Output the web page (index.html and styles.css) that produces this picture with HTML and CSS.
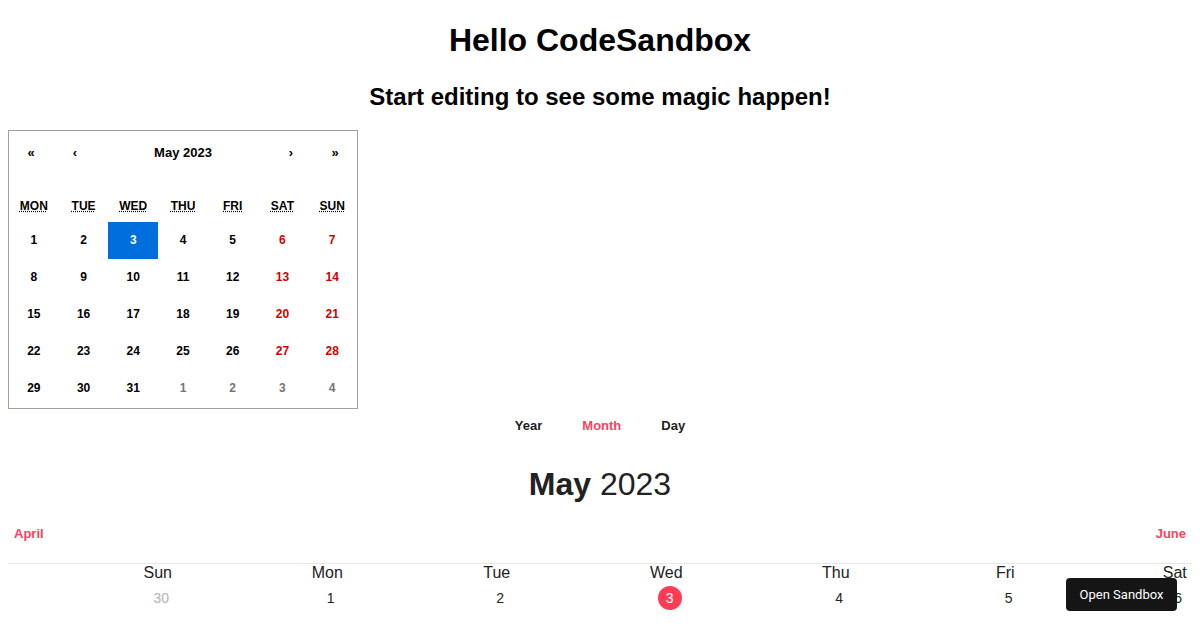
FILE: index.html
```html
<!DOCTYPE html>
<html>
<head>
  <meta name="viewport" content="width=device-width, initial-scale=1">
  <title>Calendar</title>
  <link rel="stylesheet" href="styles.css">
</head>
<body>

<div class="App">
  <h1>Hello CodeSandbox</h1>
  <h2>Start editing to see some magic happen!</h2>

  <div class="react-calendar">
    <div class="nav">
      <button class="nav-arrow">«</button>
      <button class="nav-arrow">‹</button>
      <button class="nav-label">May 2023</button>
      <button class="nav-arrow">›</button>
      <button class="nav-arrow">»</button>
    </div>

    <div class="weekdays">
      <div><abbr title="Monday">Mon</abbr></div>
      <div><abbr title="Tuesday">Tue</abbr></div>
      <div><abbr title="Wednesday">Wed</abbr></div>
      <div><abbr title="Thursday">Thu</abbr></div>
      <div><abbr title="Friday">Fri</abbr></div>
      <div><abbr title="Saturday">Sat</abbr></div>
      <div><abbr title="Sunday">Sun</abbr></div>
    </div>

    <div class="days">
      <button class="tile">1</button>
      <button class="tile">2</button>
      <button class="tile active">3</button>
      <button class="tile">4</button>
      <button class="tile">5</button>
      <button class="tile weekend">6</button>
      <button class="tile weekend">7</button>

      <button class="tile">8</button>
      <button class="tile">9</button>
      <button class="tile">10</button>
      <button class="tile">11</button>
      <button class="tile">12</button>
      <button class="tile weekend">13</button>
      <button class="tile weekend">14</button>

      <button class="tile">15</button>
      <button class="tile">16</button>
      <button class="tile">17</button>
      <button class="tile">18</button>
      <button class="tile">19</button>
      <button class="tile weekend">20</button>
      <button class="tile weekend">21</button>

      <button class="tile">22</button>
      <button class="tile">23</button>
      <button class="tile">24</button>
      <button class="tile">25</button>
      <button class="tile">26</button>
      <button class="tile weekend">27</button>
      <button class="tile weekend">28</button>

      <button class="tile">29</button>
      <button class="tile">30</button>
      <button class="tile">31</button>
      <button class="tile neighbor">1</button>
      <button class="tile neighbor">2</button>
      <button class="tile neighbor">3</button>
      <button class="tile neighbor">4</button>
    </div>
  </div>

  <div class="view-tabs">
    <button class="tab">Year</button>
    <button class="tab tab-on">Month</button>
    <button class="tab">Day</button>
  </div>

  <div class="month-title"><b>May</b> 2023</div>

  <div class="month-nav">
    <button class="month-link">April</button>
    <button class="month-link">June</button>
  </div>

  <div class="month-grid">
    <div class="grid-row heads">
      <div>Sun</div>
      <div>Mon</div>
      <div>Tue</div>
      <div>Wed</div>
      <div>Thu</div>
      <div>Fri</div>
      <div>Sat</div>
    </div>
    <div class="grid-row dates">
      <div class="date other">30</div>
      <div class="date">1</div>
      <div class="date">2</div>
      <div class="date"><span class="today">3</span></div>
      <div class="date">4</div>
      <div class="date">5</div>
      <div class="date">6</div>
    </div>
  </div>
</div>

<button class="open-sandbox">Open Sandbox</button>

</body>
</html>
```

FILE: styles.css
```css
body {
  margin: 8px;
  font-family: "Liberation Sans", Arial, sans-serif;
  color: #000;
  background: #fff;
}

.App h1,
.App h2 {
  text-align: center;
}

.App h1 {
  margin-top: 14px;
  margin-bottom: 23.5px;
}

.App h2 {
  margin-bottom: 19px;
}

button {
  font-family: "Liberation Sans", Arial, sans-serif;
  background: none;
  border: 0;
  margin: 0;
  padding: 0;
  cursor: pointer;
}

/* small calendar */
.react-calendar {
  width: 350px;
  border: 1px solid #a0a096;
  background: white;
  box-sizing: border-box;
}

.nav {
  display: flex;
  height: 44px;
  margin-bottom: 16px;
}

.nav button {
  font-size: 13px;
  font-weight: bold;
  color: #000;
}

.nav-arrow {
  min-width: 44px;
}

.nav-label {
  flex-grow: 1;
}

.weekdays {
  display: grid;
  grid-template-columns: repeat(7, 1fr);
  height: 31px;
  text-align: center;
  text-transform: uppercase;
  font-size: 12px;
  font-weight: bold;
  line-height: 31px;
}

.weekdays abbr {
  text-decoration: underline dotted;
}

.days {
  display: grid;
  grid-template-columns: repeat(7, 1fr);
}

.tile {
  padding: 10px 6px;
  line-height: 17.2px;
  font-size: 12px;
  font-weight: bold;
  color: #000;
  text-align: center;
}

.tile.weekend {
  color: #d10000;
}

.tile.neighbor {
  color: #757575;
}

.tile.active {
  background: #006edc;
  color: white;
}

/* big month view */
.view-tabs {
  display: flex;
  justify-content: center;
  gap: 40px;
  padding: 9px 0 10px;
}

.tab {
  font-size: 13px;
  line-height: 15px;
  font-weight: bold;
  color: #222;
}

.tab-on {
  color: #ff4060;
}

.month-title {
  margin-top: 23px;
  text-align: center;
  font-size: 32px;
  line-height: 37px;
  color: #222;
}

.month-nav {
  display: flex;
  justify-content: space-between;
  padding: 0 6px;
  margin-top: 23px;
}

.month-link {
  font-size: 13px;
  line-height: 15px;
  font-weight: bold;
  color: #ff4060;
}

.month-grid {
  margin-top: 22px;
  border-top: 1px solid #e6e6e6;
  overflow: hidden;
}

.grid-row {
  display: grid;
  grid-template-columns: repeat(7, 169.5px);
  padding-left: 65px;
  text-align: center;
  color: #222;
}

.heads {
  font-size: 16px;
  line-height: 18px;
}

.dates {
  margin-top: 4px;
  font-size: 14px;
  line-height: 24px;
}

.date {
  padding-left: 7px;
}

.date.other {
  color: #b3b3b3;
}

.today {
  display: inline-block;
  width: 24px;
  height: 24px;
  border-radius: 50%;
  background: #ff3b55;
  color: white;
}

.open-sandbox {
  position: fixed;
  right: 23px;
  bottom: 19px;
  width: 111px;
  height: 33px;
  border-radius: 4px;
  background: #151515;
  color: #fff;
  font-family: Roboto, "Liberation Sans", sans-serif;
  font-size: 13px;
}
```
